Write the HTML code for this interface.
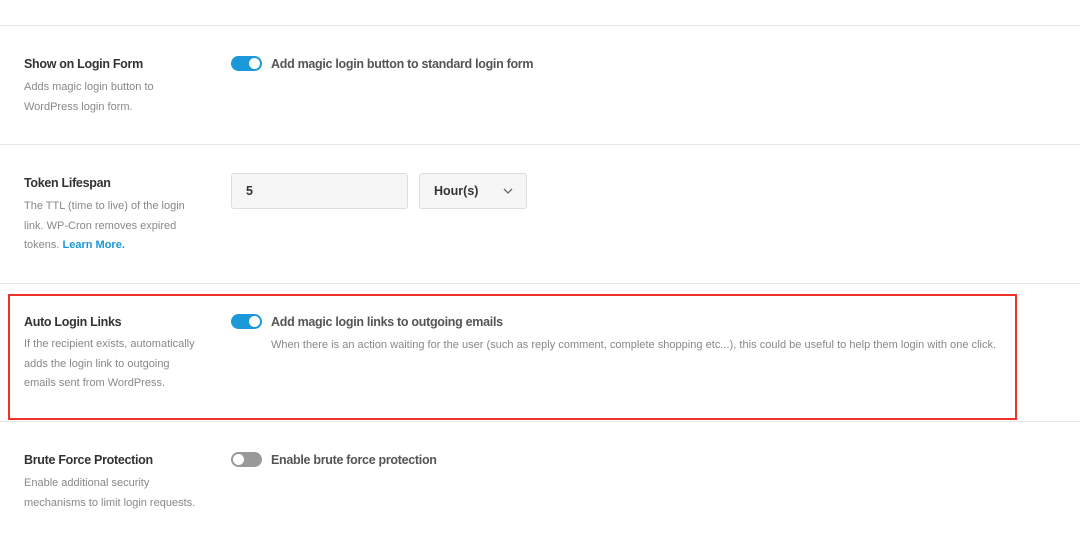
<!DOCTYPE html><html><head><style>
body{margin:0;width:1080px;height:540px;background:#fff;font-family:"Liberation Sans",sans-serif;position:relative;overflow:hidden}
.a{position:absolute}
.hr{position:absolute;left:0;width:1080px;height:1px;background:#e6e6e6}
.t{font-size:12.5px;font-weight:bold;color:#333;letter-spacing:-0.3px}
.d{font-size:11px;color:#888;line-height:19.5px;width:172px}
.l{font-size:12.5px;color:#555;font-weight:bold;letter-spacing:-0.3px}
.tg{width:31px;height:15px;border-radius:8px;background:#1a98d8}
.tg::after{content:"";position:absolute;right:2px;top:2px;width:11px;height:11px;border-radius:50%;background:#fff}
.off{background:#999}.off::after{left:2px;right:auto}
.box{background:#f6f6f6;border:1px solid #ddd;border-radius:3px;box-sizing:border-box;font-size:12.5px;font-weight:bold;color:#333}
</style></head><body>
<div class="hr" style="top:25px"></div>
<div class="hr" style="top:144px"></div>
<div class="hr" style="top:283px"></div>
<div class="hr" style="top:421px"></div>

<div class="a t" style="left:24px;top:57px">Show on Login Form</div>
<div class="a d" style="left:24px;top:78px">Adds magic login button to WordPress login form.</div>
<div class="a tg" style="left:231px;top:56px"></div>
<div class="a l" style="left:271px;top:57px">Add magic login button to standard login form</div>

<div class="a t" style="left:24px;top:176px">Token Lifespan</div>
<div class="a d" style="left:24px;top:197px">The TTL (time to live) of the login link. WP-Cron removes expired tokens. <span style="color:#1a98d8;font-weight:bold">Learn More.</span></div>
<div class="a box" style="left:231px;top:173px;width:177px;height:36px;padding:10px 0 0 14px">5</div>
<div class="a box" style="left:419px;top:173px;width:108px;height:36px;padding:10px 0 0 14px">Hour(s)<svg class="a" style="left:83px;top:14px" width="10" height="7"><path d="M1 1l4 4 4-4" stroke="#666" stroke-width="1.3" fill="none"/></svg></div>

<div class="a" style="left:8px;top:294px;width:1005px;height:122px;border:2px solid #f0302a"></div>
<div class="a t" style="left:24px;top:315px">Auto Login Links</div>
<div class="a d" style="left:24px;top:335px">If the recipient exists, automatically adds the login link to outgoing emails sent from WordPress.</div>
<div class="a tg" style="left:231px;top:314px"></div>
<div class="a l" style="left:271px;top:315px">Add magic login links to outgoing emails</div>
<div class="a" style="left:271px;top:339px;font-size:11px;color:#888;letter-spacing:0.02px">When there is an action waiting for the user (such as reply comment, complete shopping etc...), this could be useful to help them login with one click.</div>

<div class="a t" style="left:24px;top:453px">Brute Force Protection</div>
<div class="a d" style="left:24px;top:474px">Enable additional security mechanisms to limit login requests.</div>
<div class="a tg off" style="left:231px;top:452px"></div>
<div class="a l" style="left:271px;top:453px">Enable brute force protection</div>
</body></html>
